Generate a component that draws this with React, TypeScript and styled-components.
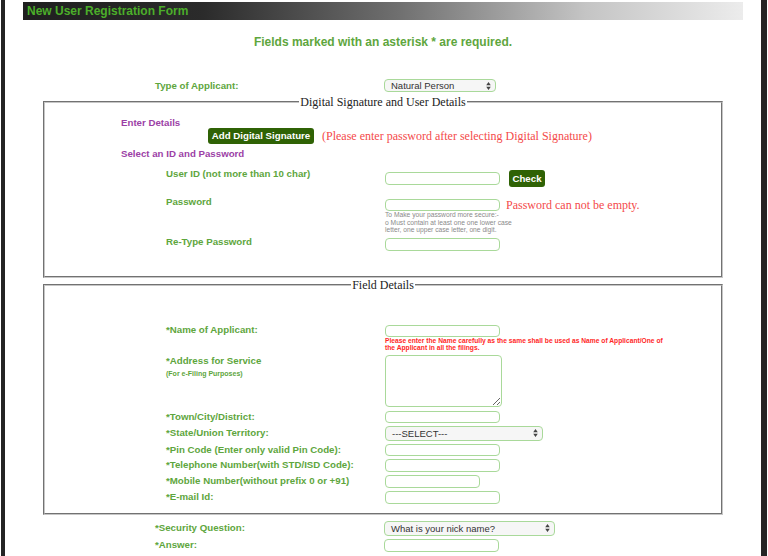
import styled, { createGlobalStyle } from "styled-components"

const palette = {
  green: "#5ea63d",
  headerGreen: "#4cae2a",
  purple: "#9c3fa6",
  red: "#f44a4a",
  hintRed: "#ff2727",
  button: "#2f6205",
  field: "#a9d99a",
  ink: "#222",
}

const sans = `"Liberation Sans", Arial, sans-serif`
const serif = `"Liberation Serif", "Times New Roman", serif`

const GlobalStyle = createGlobalStyle`
  html, body {
    margin: 0;
    padding: 0;
    background: #fff;
  }
  body {
    font-family: ${sans};
  }
`

const Frame = styled.div`
  box-sizing: border-box;
  height: 556px;
  margin: 0 1px;
  border-left: 4px solid #242424;
  border-right: 6px solid #242424;
  overflow: hidden;
`

const TitleBar = styled.div`
  margin: 2px 18px 0;
  height: 18px;
  padding-left: 4px;
  background: linear-gradient(to right, #1f1f1f 0%, #2b2b2b 25%, #6f6f6f 52%, #c4c4c4 78%, #ececec 100%);
  color: ${palette.headerGreen};
  font: bold 12px/18px ${sans};
`

const Notice = styled.p`
  margin: 15px 0 0;
  text-align: center;
  color: ${palette.green};
  font: bold 12px/14px ${sans};
`

const Row = styled.div<{ $indent: number; $labelWidth: number; $top: number; $align?: string }>`
  display: grid;
  grid-template-columns: ${({ $labelWidth }) => $labelWidth}px auto;
  align-items: ${({ $align }) => $align ?? "center"};
  padding-left: ${({ $indent }) => $indent}px;
  margin-top: ${({ $top }) => $top}px;
`

const Label = styled.label`
  display: block;
  color: ${palette.green};
  font: bold 9.7px/12px ${sans};
  white-space: nowrap;
`

const SubLabel = styled.div`
  margin-top: 3.6px;
  color: ${palette.green};
  font: bold 7px/8px ${sans};
  white-space: nowrap;
`

const Control = styled.div<{ $pad?: number }>`
  display: flex;
  flex-direction: column;
  align-items: flex-start;
  padding-top: ${({ $pad }) => $pad ?? 0}px;
`

const InlineGroup = styled.div<{ $gap: number }>`
  display: flex;
  align-items: center;
  gap: ${({ $gap }) => $gap}px;
`

const TextInput = styled.input<{ $w?: number }>`
  box-sizing: border-box;
  width: ${({ $w }) => $w ?? 115}px;
  height: 12.5px;
  margin: 0;
  padding: 0 4px;
  border: 1.5px solid ${palette.field};
  border-radius: 4px;
  background: #fff;
  outline: none;
  font: 9px ${sans};
`

const TextArea = styled.textarea`
  box-sizing: border-box;
  width: 116.5px;
  height: 52.6px;
  margin: 0;
  padding: 2px 4px;
  border: 1.5px solid ${palette.field};
  border-radius: 4px;
  outline: none;
  font: 9px ${sans};
`

const SelectBox = styled.div<{ $w: number; $h: number }>`
  box-sizing: border-box;
  display: flex;
  align-items: center;
  justify-content: space-between;
  width: ${({ $w }) => $w}px;
  height: ${({ $h }) => $h}px;
  padding: 0 4px 0 6px;
  border: 1.5px solid ${palette.field};
  border-radius: 4px;
  background: #f6f6f6;
  color: #333;
  font: 9.5px/1 ${sans};
  white-space: nowrap;
`

const GreenButton = styled.button<{ $w: number; $h: number }>`
  box-sizing: border-box;
  width: ${({ $w }) => $w}px;
  height: ${({ $h }) => $h}px;
  margin: 0;
  padding: 0;
  border: none;
  border-radius: 3px;
  background: ${palette.button};
  color: #fff;
  font: bold 9.7px/1 ${sans};
  white-space: nowrap;
`

const Group = styled.fieldset<{ $top: number; $bottom: number }>`
  box-sizing: border-box;
  width: 680px;
  min-width: 0;
  margin: ${({ $top }) => $top}px 0 0 38px;
  padding: 0 0 ${({ $bottom }) => $bottom}px;
  border: 2px groove #c6c6c6;
`

const GroupTitle = styled.legend`
  margin: 0 auto;
  padding: 0 1px;
  color: ${palette.ink};
  font: 12px/14px ${serif};
`

const SectionTitle = styled.div<{ $top: number }>`
  margin-top: ${({ $top }) => $top}px;
  padding-left: 76px;
  color: ${palette.purple};
  font: bold 9.7px/12px ${sans};
`

const SignatureRow = styled.div`
  display: flex;
  align-items: center;
  gap: 8px;
  margin-top: -1px;
  padding-left: 163px;
`

const ErrorNote = styled.span<{ $lh?: number }>`
  color: ${palette.red};
  font: 12px/${({ $lh }) => $lh ?? 14}px ${serif};
  white-space: nowrap;
`

const PasswordHint = styled.div`
  color: #8a8a8a;
  font: 6.7px/7.5px ${sans};
  white-space: nowrap;
`

const NameHint = styled.div`
  color: ${palette.hintRed};
  font: bold 6.7px/7px ${sans};
  white-space: nowrap;
`

const Arrows = () => (
  <svg width="5" height="8" viewBox="0 0 5 8">
    <path d="M2.5 0 L4.8 3.2 H0.2 Z M2.5 8 L4.8 4.8 H0.2 Z" fill="#444" />
  </svg>
)

const Select = ({ w, h, value }: { w: number; h: number; value: string }) => (
  <SelectBox $w={w} $h={h}>
    <span>{value}</span>
    <Arrows />
  </SelectBox>
)

// rows inside a fieldset start at x=166, outside ones at x=155; inputs line up at ~385
const inner = { $indent: 121, $labelWidth: 219 }
const outer = { $indent: 150, $labelWidth: 229 }

export default function App() {
  return (
    <>
      <GlobalStyle />
      <Frame>
        <TitleBar>New User Registration Form</TitleBar>
        <Notice>Fields marked with an asterisk * are required.</Notice>

        <Row {...outer} $top={30}>
          <Label>Type of Applicant:</Label>
          <Select w={112} h={13} value="Natural Person" />
        </Row>

        <Group $top={3} $bottom={25}>
          <GroupTitle>Digital Signature and User Details</GroupTitle>
          <SectionTitle $top={8}>Enter Details</SectionTitle>
          <SignatureRow>
            <GreenButton $w={106} $h={16}>Add Digital Signature</GreenButton>
            <ErrorNote>(Please enter password after selecting Digital Signature)</ErrorNote>
          </SignatureRow>
          <SectionTitle $top={4}>Select an ID and Password</SectionTitle>

          <Row {...inner} $top={8} $align="start">
            <Label>User ID (not more than 10 char)</Label>
            <Control $pad={2}>
              <InlineGroup $gap={9}>
                <TextInput />
                <GreenButton $w={36} $h={17}>Check</GreenButton>
              </InlineGroup>
            </Control>
          </Row>

          <Row {...inner} $top={9} $align="start">
            <Label>Password</Label>
            <Control $pad={2.7}>
              <InlineGroup $gap={6}>
                <TextInput type="password" />
                <ErrorNote $lh={12}>Password can not be empty.</ErrorNote>
              </InlineGroup>
              <PasswordHint>
                To Make your password more secure:-
                <br />o Must contain at least one one lower case
                <br />letter, one upper case letter, one digit.
              </PasswordHint>
            </Control>
          </Row>

          <Row {...inner} $top={2.6} $align="start">
            <Label>Re-Type Password</Label>
            <Control $pad={2}>
              <TextInput type="password" />
            </Control>
          </Row>
        </Group>

        <Group $top={0} $bottom={9.2}>
          <GroupTitle>Field Details</GroupTitle>

          <Row {...inner} $top={32} $align="start">
            <Label>*Name of Applicant:</Label>
            <Control $pad={1}>
              <TextInput />
              <NameHint>
                Please enter the Name carefully as the same shall be used as Name of Applicant/One of
                <br />the Applicant in all the filings.
              </NameHint>
            </Control>
          </Row>

          <Row {...inner} $top={3.4} $align="start">
            <div>
              <Label>*Address for Service</Label>
              <SubLabel>(For e-Filing Purposes)</SubLabel>
            </div>
            <Control>
              <TextArea />
            </Control>
          </Row>

          <Row {...inner} $top={3.4}>
            <Label>*Town/City/District:</Label>
            <TextInput />
          </Row>
          <Row {...inner} $top={3.1}>
            <Label>*State/Union Territory:</Label>
            <Select w={158} h={14.4} value="---SELECT---" />
          </Row>
          <Row {...inner} $top={3.3}>
            <Label>*Pin Code (Enter only valid Pin Code):</Label>
            <TextInput />
          </Row>
          <Row {...inner} $top={2.8}>
            <Label>*Telephone Number(with STD/ISD Code):</Label>
            <TextInput />
          </Row>
          <Row {...inner} $top={3.5}>
            <Label>*Mobile Number(without prefix 0 or +91)</Label>
            <TextInput $w={95} />
          </Row>
          <Row {...inner} $top={3.5}>
            <Label>*E-mail Id:</Label>
            <TextInput />
          </Row>
        </Group>

        <Row {...outer} $top={5.7}>
          <Label>*Security Question:</Label>
          <Select w={171} h={15.3} value="What is your nick name?" />
        </Row>
        <Row {...outer} $top={3.3}>
          <Label>*Answer:</Label>
          <TextInput />
        </Row>
      </Frame>
    </>
  )
}
